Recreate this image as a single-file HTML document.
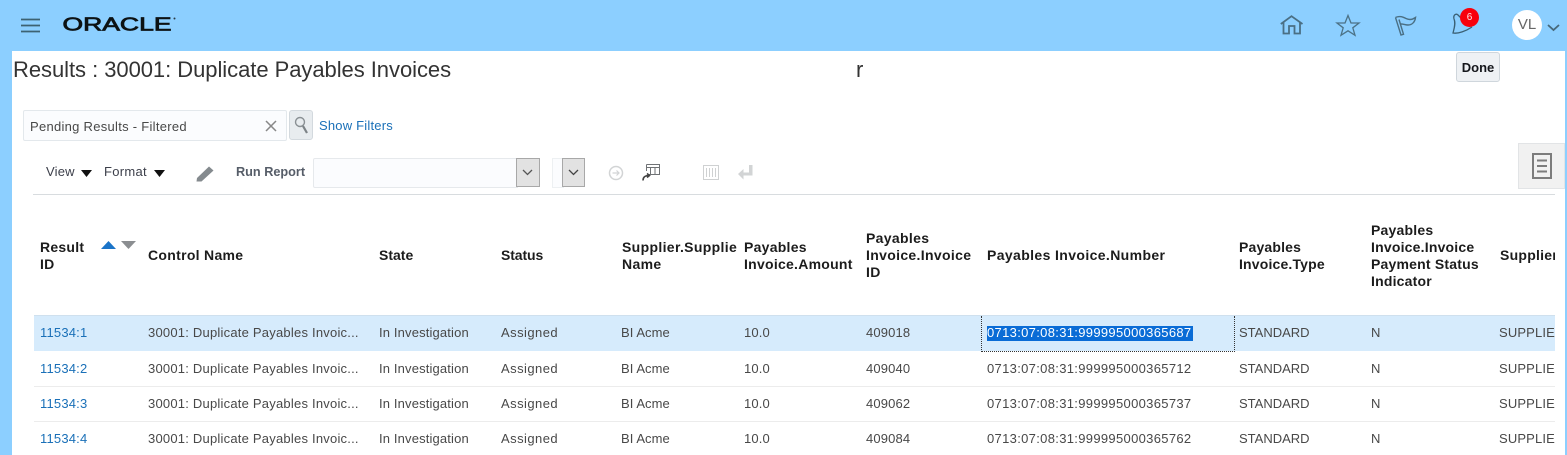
<!DOCTYPE html>
<html><head><meta charset="utf-8">
<style>
html,body{margin:0;padding:0;width:1567px;height:455px;overflow:hidden;background:#8ccfff;}
body{position:relative;font-family:"Liberation Sans",Arial,sans-serif;color:#3f3f3f;font-size:13px;}
.a{position:absolute;white-space:nowrap;}
#page{position:absolute;left:12px;top:51px;width:1553px;height:404px;background:#fff;}
.h{position:absolute;font-weight:bold;font-size:14px;line-height:17px;color:#1c1c1c;white-space:nowrap;letter-spacing:.25px;}
.c{position:absolute;white-space:nowrap;line-height:16px;font-size:13px;color:#484848;letter-spacing:.15px;}
.l{color:#1a70b8;letter-spacing:.2px;}
.n{letter-spacing:.32px;}
.s{letter-spacing:.45px;}
.b{letter-spacing:.05px;}
.k{letter-spacing:.22px;}
.row{position:absolute;left:34px;width:1521px;}
svg{position:absolute;overflow:visible;}
</style></head><body>
<div id="page"></div>

<!-- top bar -->
<svg style="left:21px;top:18px" width="19" height="15"><path d="M0 1.5H19M0 7.5H19M0 13.5H19" stroke="#3d6272" stroke-width="1.8" fill="none"/></svg>
<svg style="left:62px;top:16px" width="114" height="16"><text x="0.5" y="14.7" font-family="Liberation Sans" font-size="18.6" stroke="#0c1214" stroke-width=".75" textLength="109" lengthAdjust="spacingAndGlyphs" fill="#0c1214">ORACLE</text><circle cx="112.5" cy="2.5" r="1" fill="#2b3a44"/></svg>

<svg style="left:1280px;top:15px" width="24" height="20" fill="none" stroke="#4a6f84" stroke-width="1.8"><path d="M.8 9L11.5 1.2L22.5 9M3.5 7.5V18.5H9V11H14.5V18.5H20V7.5"/></svg>
<svg style="left:1336px;top:14px" width="24" height="22" fill="none" stroke="#4c7286" stroke-width="1.3"><path d="M12 1.5L15 9H23L16.8 13.8L19 21.3L12 16.8L5 21.3L7.2 13.8L1 9H9Z"/></svg>
<svg style="left:1394px;top:14px" width="24" height="22" fill="none" stroke="#4a6f84" stroke-width="1.4"><path d="M1.5 3.5C6 1.5 9 3 12 4.5C15 6 18 6 21.5 3.5C21 8 18 11 14 11C11 11 8.5 9.5 6 10M1.5 3.5L7 21L9.5 20.3L5 5.5"/></svg>
<svg style="left:1440px;top:0" width="40" height="40" fill="none" stroke="#3a5f73" stroke-width="1.3"><path d="M14 19C16 23 14 29 13 33C18 34 26 31 32 27M14 19C13 15 16 13 18 15L21 18"/></svg>
<div class="a" style="left:1460px;top:8px;width:19px;height:19px;border-radius:50%;background:#f8000c;color:#ffe6e6;font-size:10px;line-height:19px;text-align:center;">6</div>
<div class="a" style="left:1512px;top:10px;width:30px;height:30px;border-radius:50%;background:#fff;color:#666;font-size:15px;line-height:30px;text-align:center;">VL</div>
<svg style="left:1547px;top:24px" width="13" height="8" fill="none" stroke="#46687a" stroke-width="1.8"><path d="M1 1L6.5 6L12 1"/></svg>

<!-- title -->
<div class="a" style="left:13px;top:56px;font-size:22px;line-height:27px;color:#333;letter-spacing:-.05px;">Results : 30001: Duplicate Payables Invoices</div>
<div class="a" style="left:856px;top:56px;font-size:22px;line-height:27px;color:#333;">r</div>
<div class="a" style="left:1456px;top:52px;width:42px;height:28px;border:1px solid #cfd6dc;border-radius:3px;background:#eef1f4;font-weight:bold;font-size:13px;line-height:29px;text-align:center;color:#15171c;">Done</div>

<!-- filter -->
<div class="a" style="left:23px;top:110px;width:262px;height:29px;border:1px solid #e3e8ec;border-radius:2px;background:#fbfcfe;"></div>
<div class="a" style="left:30px;top:119px;font-size:13px;line-height:16px;color:#484848;letter-spacing:.28px;">Pending Results - Filtered</div>
<svg style="left:265px;top:120px" width="12" height="12" fill="none" stroke="#888" stroke-width="1.5"><path d="M1 1L11 11M11 1L1 11"/></svg>
<div class="a" style="left:289px;top:110px;width:22px;height:28px;border:1px solid #d3d9de;border-radius:3px;background:#e8ecef;"></div>
<svg style="left:294px;top:116px" width="15" height="20" fill="none"><circle cx="6" cy="6" r="4.5" stroke="#8a9094" stroke-width="1.4"/><path d="M9 10L13 17" stroke="#7d8387" stroke-width="2.2"/></svg>
<div class="a" style="left:319px;top:118px;font-size:13px;line-height:16px;color:#1a70b8;letter-spacing:.2px;">Show Filters</div>

<!-- toolbar -->
<div class="a" style="left:46px;top:164px;line-height:16px;color:#3c3f4a;letter-spacing:.2px;">View</div>
<svg style="left:81px;top:170px" width="11" height="7"><path d="M0 0H11L5.5 7Z" fill="#111"/></svg>
<div class="a" style="left:104px;top:164px;line-height:16px;color:#3c3f4a;letter-spacing:.3px;">Format</div>
<svg style="left:154px;top:170px" width="11" height="7"><path d="M0 0H11L5.5 7Z" fill="#111"/></svg>
<svg style="left:196px;top:164px" width="20" height="18"><path d="M1 14L13 2.5L17.5 6.5L5.5 17.5L0.5 17.5Z" fill="#848a8e"/></svg>
<div class="a" style="left:236px;top:164px;line-height:16px;font-weight:bold;font-size:12.7px;color:#565d68;">Run Report</div>
<div class="a" style="left:313px;top:158px;width:203px;height:28px;border:1px solid #e6e9ec;border-radius:2px 0 0 2px;background:#fbfcfe;"></div>
<div class="a" style="left:516px;top:158px;width:22px;height:27px;border:1px solid #a8a8a8;background:#e2e2e2;"></div>
<svg style="left:522px;top:169px" width="11" height="7" fill="none" stroke="#555" stroke-width="1.3"><path d="M1 1L5.5 5.5L10 1"/></svg>
<div class="a" style="left:552px;top:158px;width:10px;height:28px;border:1px solid #edf0f2;background:#fbfcfe;"></div>
<div class="a" style="left:562px;top:158px;width:21px;height:27px;border:1px solid #a8a8a8;background:#e2e2e2;"></div>
<svg style="left:568px;top:169px" width="11" height="7" fill="none" stroke="#444" stroke-width="1.3"><path d="M1 1L5.5 5.5L10 1"/></svg>
<svg style="left:608px;top:165px" width="16" height="16" fill="none" stroke="#d2d4d5" stroke-width="1.5"><circle cx="8" cy="8" r="6.5"/><path d="M4.5 8H11M8.5 5.5L11 8L8.5 10.5" stroke-width="1.2"/></svg>
<svg style="left:641px;top:163px" width="19" height="19" fill="none" stroke="#6f7275" stroke-width="1"><path d="M5.5 1.5H18.5V11.5H8M5.5 4.5H18.5M9.5 4.5V11.5M14 4.5V11.5M5.5 1.5V8" /><path d="M2 17.5C2 14 4 12.5 8 12.5M6 10.5L8.5 12.5L6 14.5" stroke="#444" stroke-width="1.6"/></svg>
<svg style="left:703px;top:165px" width="16" height="15" fill="none" stroke="#cfd1d2" stroke-width="1"><path d="M.5.5H15.5V14.5H.5ZM3.5 3V12M6.5 3V12M9.5 3V12M12.5 3V12"/></svg>
<svg style="left:738px;top:165px" width="15" height="15"><path d="M11 0H14.5V10.5H5.5V14.5L0 9L5.5 4V7.5H11Z" fill="#d2d4d5"/></svg>
<div class="a" style="left:33px;top:194px;width:1522px;height:1px;background:#d8dcdf;"></div>
<div class="a" style="left:1518px;top:143px;width:47px;height:46px;border:1px solid #e2e4e6;background:#f1f1f1;box-sizing:border-box;"></div>
<svg style="left:1532px;top:153px" width="20" height="26" fill="none" stroke="#7c7c7c" stroke-width="2"><path d="M1 1H19V25H1ZM5 7.5H15M5 13H15M5 18.5H15" /></svg>

<!-- table headers -->
<div class="h" style="left:40px;top:239px;">Result<br>ID</div>
<svg style="left:101px;top:241px" width="15" height="8"><path d="M7.5 0L15 8H0Z" fill="#1b74c8"/></svg>
<svg style="left:121px;top:241px" width="15" height="8"><path d="M0 0H15L7.5 8Z" fill="#8b8e91"/></svg>
<div class="h" style="left:148px;top:247px;letter-spacing:.3px;">Control Name</div>
<div class="h" style="left:379px;top:247px;letter-spacing:0;">State</div>
<div class="h" style="left:501px;top:247px;letter-spacing:-.1px;">Status</div>
<div class="h" style="left:622px;top:239px;width:115px;overflow:hidden;letter-spacing:.34px;">Supplier.Supplier<br>Name</div>
<div class="h" style="left:744px;top:239px;letter-spacing:.26px;">Payables<br>Invoice.Amount</div>
<div class="h" style="left:866px;top:230px;letter-spacing:.33px;">Payables<br>Invoice.Invoice<br>ID</div>
<div class="h" style="left:987px;top:247px;letter-spacing:.38px;">Payables Invoice.Number</div>
<div class="h" style="left:1239px;top:239px;letter-spacing:.17px;">Payables<br>Invoice.Type</div>
<div class="h" style="left:1371px;top:222px;letter-spacing:.2px;">Payables<br>Invoice.Invoice<br>Payment Status<br>Indicator</div>
<div class="h" style="left:1500px;top:247px;width:55px;overflow:hidden;">Supplier</div>

<!-- rows -->
<div class="row" style="top:315px;height:36px;background:#d6ebfc;border-top:1px solid #cfe0ee;box-sizing:border-box;"></div>
<div class="row" style="top:386px;height:1px;background:#ececec;"></div>
<div class="row" style="top:421px;height:1px;background:#ececec;"></div>
<div class="a" style="left:981px;top:316px;width:252px;height:35px;border-left:1px dotted #333;border-right:1px dotted #333;border-bottom:1px dotted #333;"></div>
<div class="a" style="left:987px;top:326px;width:206px;height:15px;background:#0a6cd6;"></div>

<div class="c l" style="left:40px;top:325px;">11534:1</div>
<div class="c k" style="left:148px;top:325px;">30001: Duplicate Payables Invoic...</div>
<div class="c" style="left:379px;top:325px;">In Investigation</div>
<div class="c s" style="left:501px;top:325px;">Assigned</div>
<div class="c b" style="left:621px;top:325px;">BI Acme</div>
<div class="c" style="left:744px;top:325px;">10.0</div>
<div class="c" style="left:866px;top:325px;">409018</div>
<div class="c n" style="left:987px;top:325px;color:#fff;">0713:07:08:31:999995000365687</div>
<div class="c" style="left:1239px;top:325px;letter-spacing:0;">STANDARD</div>
<div class="c" style="left:1371px;top:325px;">N</div>
<div class="c" style="left:1499px;top:325px;width:56px;overflow:hidden;">SUPPLIER</div>

<div class="c l" style="left:40px;top:361px;">11534:2</div>
<div class="c k" style="left:148px;top:361px;">30001: Duplicate Payables Invoic...</div>
<div class="c" style="left:379px;top:361px;">In Investigation</div>
<div class="c s" style="left:501px;top:361px;">Assigned</div>
<div class="c b" style="left:621px;top:361px;">BI Acme</div>
<div class="c" style="left:744px;top:361px;">10.0</div>
<div class="c" style="left:866px;top:361px;">409040</div>
<div class="c n" style="left:987px;top:361px;">0713:07:08:31:999995000365712</div>
<div class="c" style="left:1239px;top:361px;letter-spacing:0;">STANDARD</div>
<div class="c" style="left:1371px;top:361px;">N</div>
<div class="c" style="left:1499px;top:361px;width:56px;overflow:hidden;">SUPPLIER</div>

<div class="c l" style="left:40px;top:396px;">11534:3</div>
<div class="c k" style="left:148px;top:396px;">30001: Duplicate Payables Invoic...</div>
<div class="c" style="left:379px;top:396px;">In Investigation</div>
<div class="c s" style="left:501px;top:396px;">Assigned</div>
<div class="c b" style="left:621px;top:396px;">BI Acme</div>
<div class="c" style="left:744px;top:396px;">10.0</div>
<div class="c" style="left:866px;top:396px;">409062</div>
<div class="c n" style="left:987px;top:396px;">0713:07:08:31:999995000365737</div>
<div class="c" style="left:1239px;top:396px;letter-spacing:0;">STANDARD</div>
<div class="c" style="left:1371px;top:396px;">N</div>
<div class="c" style="left:1499px;top:396px;width:56px;overflow:hidden;">SUPPLIER</div>

<div class="c l" style="left:40px;top:431px;">11534:4</div>
<div class="c k" style="left:148px;top:431px;">30001: Duplicate Payables Invoic...</div>
<div class="c" style="left:379px;top:431px;">In Investigation</div>
<div class="c s" style="left:501px;top:431px;">Assigned</div>
<div class="c b" style="left:621px;top:431px;">BI Acme</div>
<div class="c" style="left:744px;top:431px;">10.0</div>
<div class="c" style="left:866px;top:431px;">409084</div>
<div class="c n" style="left:987px;top:431px;">0713:07:08:31:999995000365762</div>
<div class="c" style="left:1239px;top:431px;letter-spacing:0;">STANDARD</div>
<div class="c" style="left:1371px;top:431px;">N</div>
<div class="c" style="left:1499px;top:431px;width:56px;overflow:hidden;">SUPPLIER</div>
</body></html>
